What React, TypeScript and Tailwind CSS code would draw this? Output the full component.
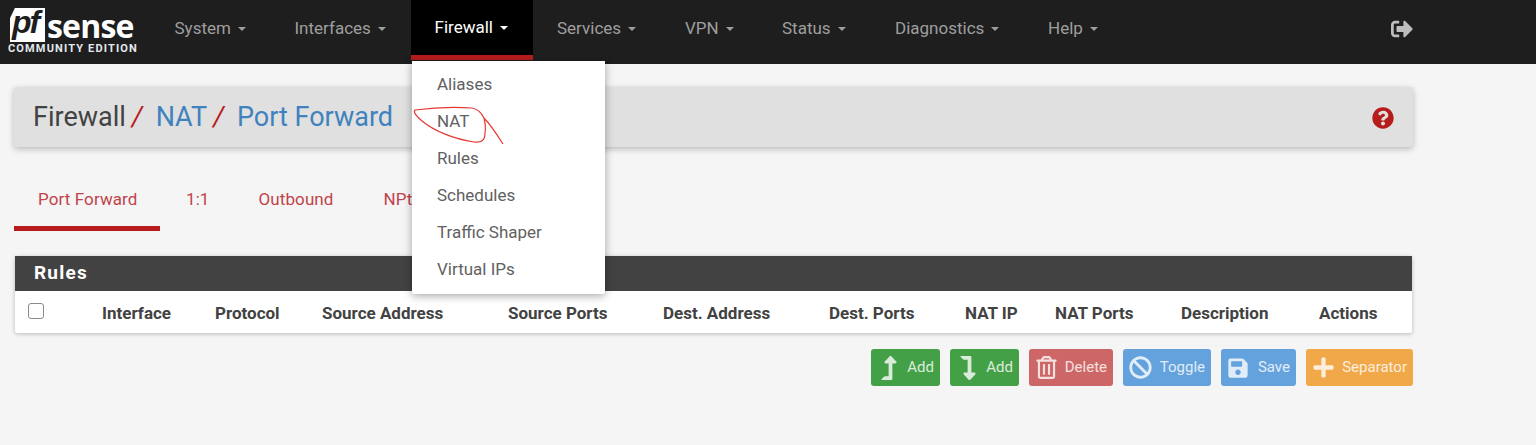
import {
  FaBan,
  FaLevelDownAlt,
  FaLevelUpAlt,
  FaPlus,
  FaQuestionCircle,
  FaRegTrashAlt,
  FaSave,
  FaSignOutAlt,
} from 'react-icons/fa';
import type { ReactNode } from 'react';

const NAV = [
  { label: 'System', width: 'w-[120px]' },
  { label: 'Interfaces', width: 'w-[140px]' },
  { label: 'Firewall', width: 'w-[122.5px]', active: true },
  { label: 'Services', width: 'w-[128px]' },
  { label: 'VPN', width: 'w-[97px]' },
  { label: 'Status', width: 'w-[113px]' },
  { label: 'Diagnostics', width: 'w-[153px]' },
  { label: 'Help', width: 'w-[100px]' },
];

const MENU = ['Aliases', 'NAT', 'Rules', 'Schedules', 'Traffic Shaper', 'Virtual IPs'];

const COLUMNS = [
  'Interface',
  'Protocol',
  'Source Address',
  'Source Ports',
  'Dest. Address',
  'Dest. Ports',
  'NAT IP',
  'NAT Ports',
  'Description',
  'Actions',
];

function Logo() {
  return (
    <div className="w-[140px] pl-2 pt-2 shrink-0">
      <div className="flex items-end h-[34px] pl-[2px]">
        <div className="w-[35px] h-[34px] bg-white [clip-path:polygon(14%_0,100%_0,100%_100%,0_100%,0_30%)] text-[#1e1e1e] italic font-bold text-[32px] leading-[28px] tracking-[-2px] font-['Liberation_Sans',sans-serif] pl-[2px]">
          pf
        </div>
        <span className="text-white font-bold text-[32px] leading-[33px] font-['Open_Sans',sans-serif] ml-[2px] tracking-[-0.8px]">
          sense
        </span>
      </div>
      <div className="text-[#e4e9ee] font-bold text-[11px] leading-[12px] tracking-[1.15px] whitespace-nowrap mt-[1px] font-['Roboto',sans-serif]">
        COMMUNITY EDITION
      </div>
    </div>
  );
}

function ActionButton({
  icon,
  label,
  color,
  width,
}: {
  icon: ReactNode;
  label: string;
  color: string;
  width: string;
}) {
  return (
    <button
      className={`h-[37px] rounded-[3px] flex items-center justify-between pl-[6px] pr-[6px] text-white/80 text-[15px] ${color} ${width}`}
    >
      {icon}
      <span>{label}</span>
    </button>
  );
}

export default function App() {
  return (
    <div className="relative h-[445px] overflow-hidden bg-[#f5f5f5] font-['Roboto',sans-serif] text-[#333]">
      <header className="h-[64px] bg-[#1e1e1e] flex items-start">
        <Logo />
        <nav className="flex ml-[10.5px]">
          {NAV.map((n) => (
            <div
              key={n.label}
              className={`h-[60px] flex items-center pl-[24px] text-[17px] shrink-0 ${n.width} ${
                n.active
                  ? 'bg-black text-white border-b-[5px] border-[#b71c1c] pt-[1px]'
                  : 'text-[#9e9e9e] pb-[3px]'
              }`}
            >
              {n.label}
              <span className="ml-[7px] w-0 h-0 border-x-[4.5px] border-x-transparent border-t-[4.5px] border-t-current" />
            </div>
          ))}
        </nav>
        <div className="ml-auto mr-[123px] h-[58px] flex items-center text-[#bdbdbd]">
          <FaSignOutAlt size={22} />
        </div>
      </header>

      <main className="pl-[14px] w-[1413px]">
        <div className="mt-[23px] h-[60px] bg-[#e0e0e0] rounded-[3px] shadow-[0_2px_6px_rgba(0,0,0,0.25)] flex items-center pl-[19px] pr-[19px] text-[27px] leading-none">
          <span className="text-[#424242]">Firewall</span>
          <span className="text-[#b71c1c] ml-[6px] italic">/</span>
          <span className="text-[#3f82bd] ml-[13px]">NAT</span>
          <span className="text-[#b71c1c] ml-[6px] italic">/</span>
          <span className="text-[#3f82bd] ml-[13px]">Port Forward</span>
          <span className="ml-auto mt-[2px] text-[#b71c1c]">
            <FaQuestionCircle size={22} />
          </span>
        </div>

        <div className="mt-[35px] flex text-[17px] tracking-[0.1px] text-[#c0434a]">
          <div className="w-[146px] h-[49px] pt-[5px] pl-[24px] border-b-[5px] border-[#b71c1c]">Port Forward</div>
          <div className="pt-[5px] ml-[26px]">1:1</div>
          <div className="pt-[5px] ml-[49px]">Outbound</div>
          <div className="pt-[5px] ml-[50px]">NPt</div>
        </div>

        <section className="mt-[25px] ml-[1px] w-[1397px] bg-white rounded-[2px] shadow-[0_1px_4px_rgba(0,0,0,0.25)]">
          <div className="h-[35px] bg-[#424242] text-white font-bold text-[19px] tracking-[1.2px] pl-[19px] flex items-center">
            Rules
          </div>
          <div className="h-[42px] pt-[3px] grid grid-cols-[87px_113px_107px_186px_155px_166px_136px_90px_126px_138px_1fr] items-center text-[17px] font-bold text-[#424242]">
            <div className="pl-[13px] pb-[6px] flex">
              <input type="checkbox" className="w-[16px] h-[16px] appearance-none border border-[#8a8a8a] rounded-[3px] bg-white" />
            </div>
            {COLUMNS.map((c) => (
              <div key={c} className="whitespace-nowrap">
                {c}
              </div>
            ))}
          </div>
        </section>

        <div className="mt-[16px] flex justify-end gap-[10px] pr-0 w-[1399px]">
          <ActionButton icon={<FaLevelUpAlt size={24} />} label="Add" color="bg-[#43a047]" width="w-[69px]" />
          <ActionButton icon={<FaLevelDownAlt size={24} />} label="Add" color="bg-[#43a047]" width="w-[69px]" />
          <ActionButton icon={<FaRegTrashAlt size={23} />} label="Delete" color="bg-[#cd6666]" width="w-[84px]" />
          <ActionButton icon={<FaBan size={23} />} label="Toggle" color="bg-[#64a2dd]" width="w-[88px]" />
          <ActionButton icon={<FaSave size={22} />} label="Save" color="bg-[#64a2dd]" width="w-[75px]" />
          <ActionButton icon={<FaPlus size={23} />} label="Separator" color="bg-[#f0a848]" width="w-[107px]" />
        </div>
      </main>

      <div className="absolute left-[412px] top-[61px] w-[193px] h-[233px] bg-white shadow-[0_2px_8px_rgba(0,0,0,0.35)] rounded-b-[2px] pt-[5px] text-[17px] text-[#616161]">
        {MENU.map((m) => (
          <div key={m} className="h-[37px] flex items-center pl-[25px]">
            {m}
          </div>
        ))}
      </div>

      <svg className="absolute left-[410px] top-[100px]" width="100" height="50" viewBox="0 0 100 50" fill="none">
        <path
          d="M93 44 C 86 33 80 24 74 18 C 72 14 68 9 62 8 C 45 7 20 8 5 10 C 3 12 6 16 12 21 C 24 31 44 39 64 42 C 72 43 75 40 75 33 C 76 27 75 22 74 18"
          stroke="#e53935"
          strokeWidth="1.2"
        />
      </svg>
    </div>
  );
}
